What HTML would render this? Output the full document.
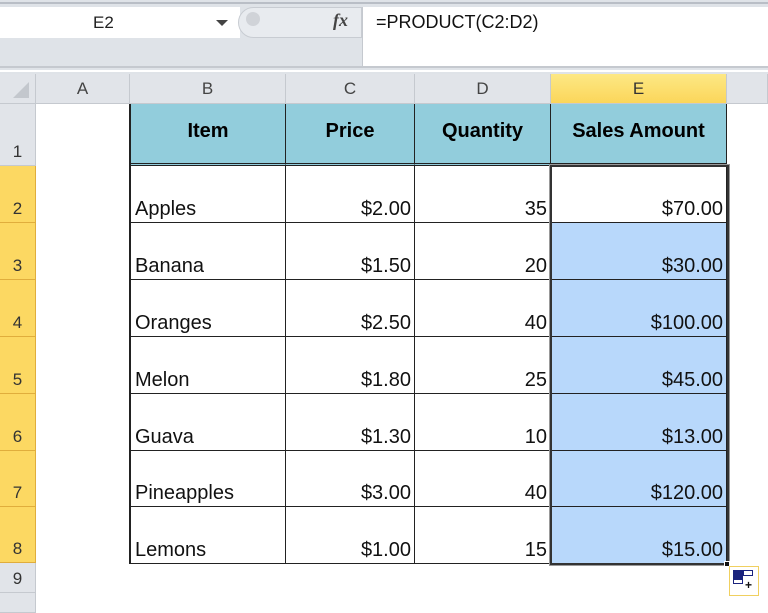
<!DOCTYPE html><html><head><style>
*{margin:0;padding:0;box-sizing:border-box}
body{width:768px;height:604px;overflow:hidden;background:#fff;font-family:"Liberation Sans",sans-serif;position:relative}
div{position:absolute}
.rh{left:0;width:36px;background:#e1e4e9;border-bottom:1px solid #c5c9cf;border-right:1px solid #c5c9cf;font-size:17px;color:#333;text-align:center;display:flex;align-items:flex-end;justify-content:center;padding-bottom:3px}
.sel{background:#fcd862;border-color:#e0ad3c}
.ch{top:74px;height:30px;background:#e1e4e9;border-right:1px solid #c5c9cf;font-size:17px;color:#444;text-align:center;line-height:30px}
.c{font-size:20px;color:#111;display:flex;align-items:flex-end;padding:0 3px 1px 4px;border-right:1.5px solid #222;border-bottom:1.5px solid #222}
.r{justify-content:flex-end}
.h{top:104px;height:62px;background:#92cddc;font-weight:bold;font-size:20px;display:flex;align-items:center;justify-content:center;border-right:1.5px solid #222;border-bottom:3px double #222;padding-bottom:4px}
</style></head><body>
<div style="left:0;top:0;width:768px;height:74px;background:#dfe3e8"></div>
<div style="left:0;top:2px;width:768px;height:2px;background:#b9bec6"></div>
<div style="left:0;top:7px;width:240px;height:31px;background:#fff;font-size:17px;line-height:31px;padding-left:93px;color:#222">E2</div>
<div style="left:216px;top:20px;border-left:6px solid transparent;border-right:6px solid transparent;border-top:6px solid #444"></div>
<div style="left:238px;top:7px;width:124px;height:31px;background:#e8ebef;border-radius:16px 0 0 16px;border:1px solid #c8ccd2"></div>
<div style="left:246px;top:12px;width:14px;height:14px;border-radius:50%;background:#d0d3d8"></div>
<div style="left:333px;top:10px;font-size:18px;font-style:italic;font-weight:bold;font-family:'Liberation Serif',serif;color:#444">fx</div>
<div style="left:362px;top:7px;width:406px;height:60px;background:#fff;border-left:1px solid #c5c9cf;font-size:18px;padding:5px 0 0 13px;color:#111">=PRODUCT(C2:D2)</div>
<div style="left:0;top:66px;width:768px;height:2px;background:#c5c9cf"></div>
<div style="left:0;top:70px;width:768px;height:2px;background:#fff"></div>
<div style="left:0;top:74px;width:36px;height:30px;background:#e1e4e9;border-right:1px solid #c5c9cf"></div>
<div style="left:13px;top:82px;width:0;height:0;border-left:16px solid transparent;border-bottom:16px solid #c3c7cd"></div>
<div class="ch" style="left:36px;width:94px">A</div>
<div class="ch" style="left:130px;width:156px">B</div>
<div class="ch" style="left:286px;width:129px">C</div>
<div class="ch" style="left:415px;width:136px">D</div>
<div class="ch" style="left:551px;width:176px;background:linear-gradient(#fde885,#fbd65a);border-bottom:1px solid #e0ad3c;color:#333">E</div>
<div class="ch" style="left:727px;width:41px"></div>
<div style="left:0;top:103px;width:768px;height:1px;background:#c5c9cf"></div>
<div class="rh" style="top:104px;height:62px">1</div>
<div class="rh sel" style="top:166px;height:57px">2</div>
<div class="rh sel" style="top:223px;height:57px">3</div>
<div class="rh sel" style="top:280px;height:57px">4</div>
<div class="rh sel" style="top:337px;height:57px">5</div>
<div class="rh sel" style="top:394px;height:57px">6</div>
<div class="rh sel" style="top:451px;height:56px">7</div>
<div class="rh sel" style="top:507px;height:56px">8</div>
<div class="rh" style="top:563px;height:30px">9</div>
<div class="rh" style="top:593px;height:20px"></div>
<div style="left:129px;top:104px;width:2px;height:460px;background:#222"></div>
<div class="h" style="left:131px;width:155px">Item</div>
<div class="h" style="left:286px;width:129px">Price</div>
<div class="h" style="left:415px;width:136px">Quantity</div>
<div class="h" style="left:551px;width:176px">Sales Amount</div>
<div style="left:552px;top:223px;width:174px;height:340px;background:#b8d8fb"></div>

<div class="c" style="left:131px;top:166px;width:155px;height:57px">Apples</div>
<div class="c r" style="left:286px;top:166px;width:129px;height:57px">$2.00</div>
<div class="c r" style="left:415px;top:166px;width:136px;height:57px">35</div>
<div class="c r" style="left:551px;top:166px;width:176px;height:57px">$70.00</div>

<div class="c" style="left:131px;top:223px;width:155px;height:57px">Banana</div>
<div class="c r" style="left:286px;top:223px;width:129px;height:57px">$1.50</div>
<div class="c r" style="left:415px;top:223px;width:136px;height:57px">20</div>
<div class="c r" style="left:551px;top:223px;width:176px;height:57px">$30.00</div>

<div class="c" style="left:131px;top:280px;width:155px;height:57px">Oranges</div>
<div class="c r" style="left:286px;top:280px;width:129px;height:57px">$2.50</div>
<div class="c r" style="left:415px;top:280px;width:136px;height:57px">40</div>
<div class="c r" style="left:551px;top:280px;width:176px;height:57px">$100.00</div>

<div class="c" style="left:131px;top:337px;width:155px;height:57px">Melon</div>
<div class="c r" style="left:286px;top:337px;width:129px;height:57px">$1.80</div>
<div class="c r" style="left:415px;top:337px;width:136px;height:57px">25</div>
<div class="c r" style="left:551px;top:337px;width:176px;height:57px">$45.00</div>

<div class="c" style="left:131px;top:394px;width:155px;height:57px">Guava</div>
<div class="c r" style="left:286px;top:394px;width:129px;height:57px">$1.30</div>
<div class="c r" style="left:415px;top:394px;width:136px;height:57px">10</div>
<div class="c r" style="left:551px;top:394px;width:176px;height:57px">$13.00</div>

<div class="c" style="left:131px;top:451px;width:155px;height:56px">Pineapples</div>
<div class="c r" style="left:286px;top:451px;width:129px;height:56px">$3.00</div>
<div class="c r" style="left:415px;top:451px;width:136px;height:56px">40</div>
<div class="c r" style="left:551px;top:451px;width:176px;height:56px">$120.00</div>

<div class="c" style="left:131px;top:507px;width:155px;height:57px">Lemons</div>
<div class="c r" style="left:286px;top:507px;width:129px;height:57px">$1.00</div>
<div class="c r" style="left:415px;top:507px;width:136px;height:57px">15</div>
<div class="c r" style="left:551px;top:507px;width:176px;height:57px">$15.00</div>

<div style="left:550px;top:165px;width:179px;height:400px;border:2px solid #333;outline:1px solid #999"></div>
<div style="left:724px;top:561px;width:6px;height:6px;background:#111;border:1px solid #fff"></div>
<div style="left:729px;top:566px;width:30px;height:30px;border:1px solid #f0d060;background:#fff"></div>
<div style="left:733px;top:570px;width:10px;height:9px;background:#1a237e"></div>
<div style="left:743px;top:570px;width:10px;height:6px;border:1px solid #1a237e"></div>
<div style="left:733px;top:579px;width:10px;height:5px;border:1px solid #1a237e"></div>
<div style="left:745px;top:578px;font-size:12px;font-weight:bold;color:#111">+</div>
</body></html>
